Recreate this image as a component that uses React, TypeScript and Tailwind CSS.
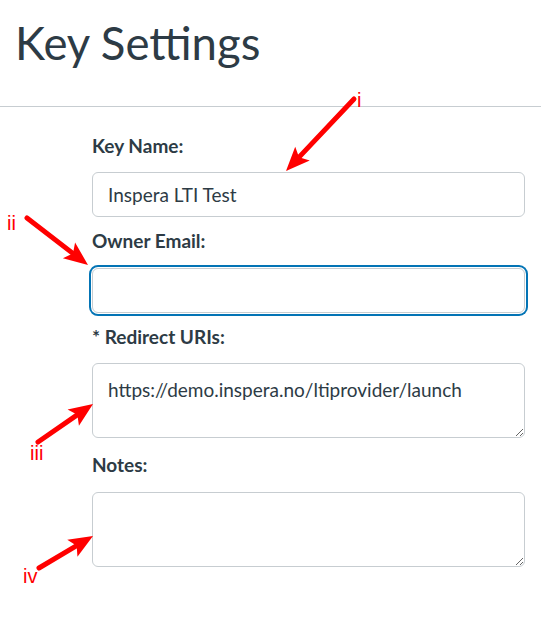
import React from 'react'

/**
 * KeySettings — formulário de chave de desenvolvedor com anotações em vermelho
 */

type Pt = [number, number]

interface Arrow {
  from: Pt
  to: Pt
}

const arrows: Arrow[] = [
  { from: [354, 99], to: [286, 171] },
  { from: [27, 218], to: [88, 265] },
  { from: [38, 442], to: [93, 404] },
  { from: [39, 568], to: [93, 536] },
]

const notes = [
  { text: 'i', className: 'left-[357px] top-[90px]' },
  { text: 'ii', className: 'left-[7px] top-[213px]' },
  { text: 'iii', className: 'left-[30px] top-[443px]' },
  { text: 'iv', className: 'left-[23px] top-[566px]' },
]

function RedArrow({ from, to }: Arrow) {
  const [x1, y1] = from
  const [x2, y2] = to
  const len = Math.hypot(x2 - x1, y2 - y1)
  const ux = (x2 - x1) / len
  const uy = (y2 - y1) / len
  const headLen = 24
  const headW = 10
  const bx = x2 - ux * headLen
  const by = y2 - uy * headLen
  const head = [
    `${x2},${y2}`,
    `${bx - uy * headW},${by + ux * headW}`,
    `${bx + ux * 5},${by + uy * 5}`,
    `${bx + uy * headW},${by - ux * headW}`,
  ].join(' ')
  return (
    <g>
      <line x1={x1} y1={y1} x2={bx + ux * 7} y2={by + uy * 7} stroke="#ff0000" strokeWidth={5} strokeLinecap="round" />
      <polygon points={head} fill="#ff0000" />
    </g>
  )
}

const labelCls = 'block text-[19px] font-bold leading-6 text-[#2d3b45]'
const boxCls =
  'block w-full box-border rounded-[6px] border border-[#c7cdd1] bg-white px-[15px] text-[19px] text-[#2d3b45] outline-none font-[Lato,sans-serif]'

export default function App() {
  return (
    <div className="relative h-[624px] w-full overflow-hidden bg-white font-[Lato,'Noto_Sans',sans-serif] text-[#2d3b45]">
      <h1 className="pl-[15px] pt-[16px] text-[45.5px] font-normal leading-[1.2] text-[#2d3b45]">Key Settings</h1>

      <div className="mt-[35px] h-px w-full bg-[#c7cdd1]" />

      <form className="mt-[27px] pl-[92px] pr-[16px]">
        <label className={`${labelCls} mb-[14px]`}>Key Name:</label>
        <input readOnly value="Inspera LTI Test" className={`${boxCls} mb-[12px] h-[45px]`} />

        <label className={`${labelCls} mb-[15px]`}>Owner Email:</label>
        <input
          readOnly
          value=""
          className={`${boxCls} mb-[12px] h-[45px] ring-2 ring-[#0374b5] ring-offset-1 ring-offset-white`}
        />

        <label className={`${labelCls} mb-[14px]`}>* Redirect URIs:</label>
        <textarea
          readOnly
          value="https://demo.inspera.no/ltiprovider/launch"
          className={`${boxCls} mb-[15px] h-[75px] py-[14px] leading-6`}
        />

        <label className={`${labelCls} mb-[15px]`}>Notes:</label>
        <textarea readOnly value="" className={`${boxCls} h-[75px] py-[14px] leading-6`} />
      </form>

      {/* anotações */}
      <svg className="pointer-events-none absolute left-0 top-0" width={541} height={624} viewBox="0 0 541 624">
        {arrows.map((a, i) => (
          <RedArrow key={i} {...a} />
        ))}
      </svg>
      {notes.map((n) => (
        <span
          key={n.text}
          className={`absolute ${n.className} font-['Liberation_Sans',Arial,sans-serif] text-[20px] leading-none text-[#ff0000]`}
        >
          {n.text}
        </span>
      ))}
    </div>
  )
}
